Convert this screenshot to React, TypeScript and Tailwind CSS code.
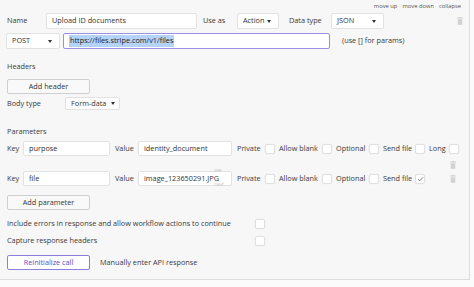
import React from "react";

const font = { fontFamily: '"Open Sans", "Liberation Sans", sans-serif' };

function Caret() {
  return <span className="inline-block w-0 h-0 border-l-[2.5px] border-r-[2.5px] border-t-[3px] border-l-transparent border-r-transparent border-t-[#333]" />;
}

function Select({ label, w, pr = "pr-[7px]" }: { label: string; w: string; pr?: string }) {
  return (
    <div className={`${w} ${pr} h-full flex items-center justify-between bg-white border border-[#e2e2e2] rounded-[2px] pl-[5px] text-[#333] whitespace-nowrap`}>
      <span>{label}</span>
      <Caret />
    </div>
  );
}

function Trash() {
  return (
    <svg width="6" height="8" viewBox="0 0 6 8" className="block">
      <rect x="0" y="0.5" width="6" height="1" fill="#d0d0d0" />
      <rect x="2" y="0" width="2" height="1" fill="#d0d0d0" />
      <rect x="0.7" y="2" width="4.6" height="6" rx="0.5" fill="#d8d8d8" />
      <rect x="1.8" y="3" width="0.5" height="4" fill="#c4c4c4" />
      <rect x="3.7" y="3" width="0.5" height="4" fill="#c4c4c4" />
    </svg>
  );
}

function Check({ on }: { on?: boolean }) {
  return (
    <span className="w-[10px] h-[10px] shrink-0 bg-white border border-[#e0e0e0] rounded-[2px] shadow-[0_0_2px_rgba(0,0,0,0.06)] flex items-center justify-center">
      {on && (
        <svg width="7" height="6" viewBox="0 0 7 6">
          <path d="M1 3.2 L2.8 4.8 L6 1.2" stroke="#777" strokeWidth="0.9" fill="none" />
        </svg>
      )}
    </span>
  );
}

function Button({ label, purple }: { label: string; purple?: boolean }) {
  return (
    <div
      className={`ml-[7px] w-[83px] h-[15px] flex items-center justify-center rounded-[2px] ${
        purple ? "border border-[#8a7fe0] text-[#5a4cc8] bg-white" : "border border-[#cfcfcf] text-[#333] bg-[#f9f9f9]"
      }`}
    >
      {label}
    </div>
  );
}

function ParamRow({ k, v, send, long, overlay }: { k: string; v: string; send?: boolean; long?: boolean; overlay?: boolean }) {
  return (
    <div className="h-[15px] flex items-center pl-[7px] whitespace-nowrap">
      <span className="w-[16px]">Key</span>
      <div className="w-[87px] h-full bg-white border border-[#e2e2e2] rounded-[2px] flex items-center pl-[5px] text-[#333]">{k}</div>
      <span className="w-[28px] pl-[5px]">Value</span>
      <div className="relative w-[94px] h-full bg-white border border-[#e2e2e2] rounded-[2px] flex items-center pl-[5px] text-[#333]">
        {v}
        {overlay && (
          <>
            <span className="absolute left-[75px] top-[-4px] text-[4.5px] text-[#c4c4c4] leading-none">see</span>
            <span className="absolute left-[75px] top-[10px] text-[4.5px] text-[#c4c4c4] leading-none">clear</span>
          </>
        )}
      </div>
      <span className="w-[33px] pl-[5px]">Private</span>
      <Check />
      <span className="w-[47px] pl-[4px]">Allow blank</span>
      <Check />
      <span className="w-[37px] pl-[4px]">Optional</span>
      <Check />
      <span className="w-[36px] pl-[4px]">Send file</span>
      <Check on={send} />
      {long ? (
        <>
          <span className="w-[24px] pl-[4px]">Long</span>
          <Check />
        </>
      ) : (
        <div className="ml-auto mr-[13px]">
          <Trash />
        </div>
      )}
    </div>
  );
}

export default function App() {
  return (
    <div className="w-[474px] h-[287px] bg-[#fbfbfb] text-[7.3px] text-[#3a3a3a] leading-none overflow-hidden" style={font}>
      <div className="w-[470px] h-[280px] bg-[#f7f7f7] border-r border-b border-[#dcdcdc] flex flex-col">
        <div className="h-[13px] flex items-center justify-end gap-[5px] pr-[8px] text-[5.8px] text-[#555]">
          <span>move up</span>
          <span>move down</span>
          <span>collapse</span>
        </div>

        <div className="h-[16px] flex items-center pl-[7px] whitespace-nowrap">
          <span className="w-[39px]">Name</span>
          <div className="w-[151px] h-full bg-white border border-[#e2e2e2] rounded-[2px] flex items-center pl-[5px] text-[#333]">Upload ID documents</div>
          <span className="w-[40px] pl-[6px]">Use as</span>
          <Select label="Action" w="w-[42px]" />
          <span className="w-[52px] pl-[10px]">Data type</span>
          <Select label="JSON" w="w-[53px]" />
          <div className="ml-[73px]">
            <Trash />
          </div>
        </div>

        <div className="mt-[4px] h-[16px] flex items-center pl-[6px] whitespace-nowrap">
          <Select label="POST" w="w-[54px]" />
          <div className="ml-[3px] w-[267px] h-full bg-white border border-[#9a8fe2] rounded-[2px] flex items-center pl-[5px]">
            <span className="bg-[#b4d3fb] text-[#222] px-[1px] py-[2px]">https://files.stripe.com/v1/files</span>
          </div>
          <span className="ml-[12px]">(use [] for params)</span>
        </div>

        <div className="mt-[12px] h-[12px] flex items-center pl-[7px]">Headers</div>
        <div className="mt-[6px]">
          <Button label="Add header" />
        </div>

        <div className="mt-[3px] h-[13px] flex items-center pl-[7px]">
          <span className="w-[58px]">Body type</span>
          <Select label="Form-data" w="w-[55px]" pr="pr-[4px]" />
        </div>

        <div className="mt-[16px] h-[12px] flex items-center pl-[7px]">Parameters</div>
        <div className="mt-[3px]">
          <ParamRow k="purpose" v="identity_document" long />
        </div>
        <div className="mt-[5px] h-[8px] flex justify-end pr-[13px]">
          <Trash />
        </div>
        <div className="mt-[2px]">
          <ParamRow k="file" v="image_123650291.JPG" send overlay />
        </div>

        <div className="mt-[9px]">
          <Button label="Add parameter" />
        </div>

        <div className="mt-[8px] h-[12px] flex items-center pl-[7px]">
          <span className="w-[248px]">Include errors in response and allow workflow actions to continue</span>
          <Check />
        </div>
        <div className="mt-[5px] h-[12px] flex items-center pl-[7px]">
          <span className="w-[248px]">Capture response headers</span>
          <Check />
        </div>

        <div className="mt-[8px] h-[15px] flex items-center">
          <Button label="Reinitialize call" purple />
          <span className="ml-[10px]">Manually enter API response</span>
        </div>
      </div>
    </div>
  );
}
